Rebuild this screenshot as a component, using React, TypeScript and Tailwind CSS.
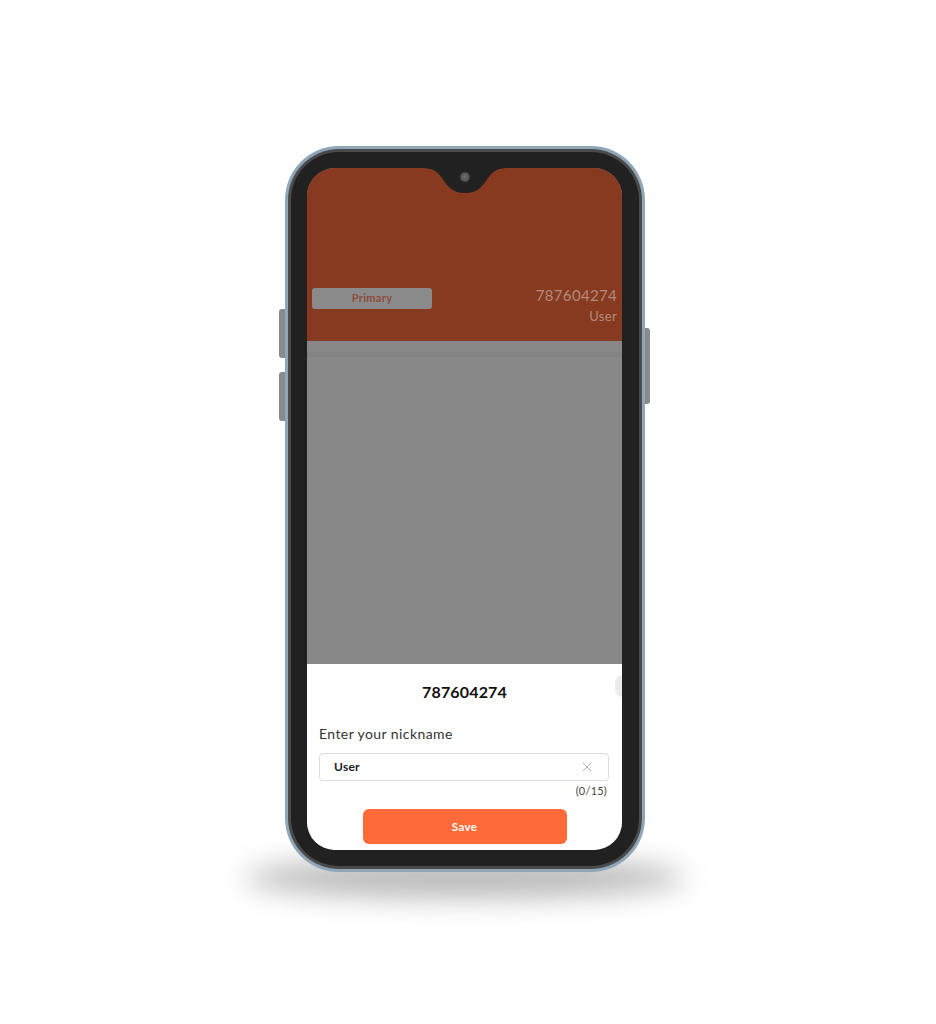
import { X } from 'lucide-react'

// ── 사이드 버튼 ──────────────────────────────────────────────
function SideButtons() {
  return (
    <>
      <div className="absolute left-[-6px] top-[163px] h-[49px] w-[7px] rounded-l-[3px] bg-[#8a8a8c]" />
      <div className="absolute left-[-6px] top-[226px] h-[49px] w-[7px] rounded-l-[3px] bg-[#8a8a8c]" />
      <div className="absolute right-[-5px] top-[182px] h-[76px] w-[6px] rounded-r-[3px] bg-[#8a8a8c]" />
    </>
  )
}

// ── 노치 ────────────────────────────────────────────────────
function Notch() {
  return (
    <svg
      className="absolute left-1/2 top-0 -translate-x-1/2"
      width="90"
      height="26"
      viewBox="0 0 90 26"
    >
      <path
        d="M0 0 H90 C78 0 74 2 68 10 C62 19 57 25 45 25 C33 25 28 19 22 10 C16 2 12 0 0 0 Z"
        fill="#212121"
      />
      <circle cx="45" cy="9" r="6" fill="#2b2b2b" />
      <circle cx="45" cy="9" r="4.5" fill="#5a5a5a" />
      <circle cx="45" cy="9" r="2" fill="#6a6a6a" />
    </svg>
  )
}

// ── 화면 ────────────────────────────────────────────────────
function Screen() {
  return (
    <div className="relative flex h-[682px] w-[315px] flex-col overflow-hidden rounded-[28px] bg-[#888888]">
      {/* 헤더 */}
      <div className="relative h-[173px] shrink-0 bg-[#873a20]">
        <Notch />
        <div className="flex items-start justify-between px-[5px] pt-[120px]">
          <div className="flex h-[21px] w-[120px] items-center justify-center rounded-[3px] bg-[#8b8b8b] text-[11px] font-bold tracking-[0.03em] text-[#8f4c3a]">
            Primary
          </div>
          <div className="flex flex-col items-end leading-none tracking-[0.02em]">
            <span className="text-[15px] text-[#b58a7c]">787604274</span>
            <span className="mt-[7px] text-[13px] text-[#b58a7c]">User</span>
          </div>
        </div>
      </div>

      {/* 딤 영역 */}
      <div className="flex h-[323px] shrink-0 flex-col">
        <div className="mt-[11px] h-[5px] bg-[#838383]" />
      </div>

      {/* 바텀시트 */}
      <div className="relative flex flex-1 flex-col bg-white px-[12px]">
        <div className="absolute right-[-9px] top-[11px] h-[22px] w-[16px] rounded-full bg-[#ececec]" />
        <div className="pt-[18px] text-center text-[16px] font-bold leading-[20px] tracking-[0.01em] text-[#111]">
          787604274
        </div>
        <div className="mt-[23px] text-[14px] leading-[18px] tracking-[0.03em] text-[#333]">Enter your nickname</div>
        <div className="mt-[10px] mr-[1px] flex h-[28px] items-center justify-between rounded-[4px] border border-[#dcdcdc] pl-[14px] pr-[13px]">
          <span className="text-[12px] font-bold tracking-[0.02em] text-[#222]">User</span>
          <X size={16} strokeWidth={1.2} className="text-[#9a9a9a]" />
        </div>
        <div className="mt-[3px] pr-[3px] text-right text-[11px] leading-[14px] tracking-[0.02em] text-[#444]">(0/15)</div>
        <div className="mx-auto mt-[11px] flex h-[35px] w-[204px] items-center justify-center rounded-[6px] bg-[#ff6b38] text-[11.5px] font-bold tracking-[0.03em] text-white">
          Save
        </div>
      </div>
    </div>
  )
}

export default function App() {
  return (
    <div
      className="relative h-[1024px] w-[936px] overflow-hidden bg-white"
      style={{ fontFamily: 'Lato, "Open Sans", "Noto Sans", sans-serif' }}
    >
      <div className="pl-[285px] pt-[146px]">
        <div className="relative w-[360px]">
          {/* 그림자 */}
          <div className="absolute left-[-40px] top-[712px] h-[40px] w-[440px] rounded-[50%] bg-[#9a9a9a] opacity-70 blur-[14px]" />
          <SideButtons />
          <div className="relative h-[726px] w-[360px] rounded-[54px] bg-[#8fa6b9] p-[3px]">
            <div className="h-full w-full rounded-[51px] bg-[#4a4a4a] p-[3px]">
              <div className="flex h-full w-full justify-center rounded-[48px] bg-[#212121] pt-[16px] pl-[16px] pr-[17px]">
                <Screen />
              </div>
            </div>
          </div>
        </div>
      </div>
    </div>
  )
}
